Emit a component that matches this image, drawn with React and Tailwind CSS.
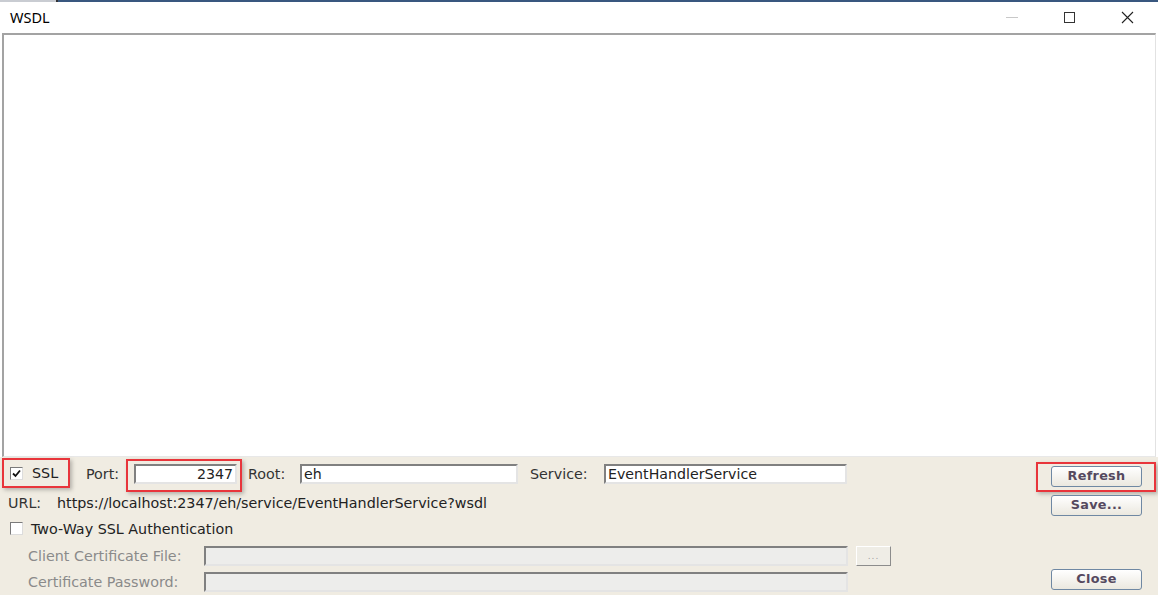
import React from 'react';

function Field({ value = '', width, align = 'left', disabled = false }) {
  return (
    <div
      className={`h-[20px] ${width} border-2 border-t-[#808080] border-l-[#808080] border-r-[#e4e4e4] border-b-[#e4e4e4] ${
        disabled ? 'bg-[#ededeb]' : 'bg-white'
      } flex items-center px-[2px] text-[14.2px] text-[#222] leading-none ${align === 'right' ? 'justify-end' : ''}`}
    >
      {value}
    </div>
  );
}

function Button({ children }) {
  return (
    <button className="w-[91px] h-[21px] rounded-[3px] border border-[#6f88a3] bg-gradient-to-b from-white to-[#ebe8df] text-[12.8px] font-bold text-[#55495f] leading-none tracking-[0.3px]">
      {children}
    </button>
  );
}

function Check({ checked }) {
  return (
    <div className="w-[13px] h-[13px] bg-white border border-t-[#7a7a7a] border-l-[#7a7a7a] border-r-[#dcdcdc] border-b-[#dcdcdc] flex items-center justify-center">
      {checked && (
        <svg width="9" height="9" viewBox="0 0 9 9">
          <path d="M1 4.5 L3.5 7 L8 1.5" fill="none" stroke="#111" strokeWidth="1.8" />
        </svg>
      )}
    </div>
  );
}

export default function App() {
  return (
    <div className="w-[1158px] h-[595px] flex flex-col bg-white overflow-hidden font-['DejaVu_Sans',sans-serif]">
      {/* window top edge */}
      <div className="h-[2px] flex">
        <div className="w-[56px] bg-[#c9ccd2]" />
        <div className="w-[2px] bg-[#333]" />
        <div className="flex-1 bg-[#39577f]" />
      </div>

      {/* title bar */}
      <div className="h-[31px] flex items-center">
        <span className="ml-[10px] text-[14.5px] text-black font-['Noto_Sans',sans-serif]">WSDL</span>
        <div className="ml-auto flex items-center">
          <div className="w-[12px] h-[1px] bg-[#c8c8c8] mr-[46px]" />
          <div className="w-[11px] h-[11px] border border-[#333] mr-[46px]" />
          <svg width="13" height="13" viewBox="0 0 13 13" className="mr-[24px]">
            <path d="M1 1 L12 12 M12 1 L1 12" stroke="#222" strokeWidth="1.1" />
          </svg>
        </div>
      </div>

      {/* wsdl text area */}
      <div className="flex-1 px-[2px]">
        <div className="h-full bg-white border-t-2 border-l-2 border-r border-b border-t-[#a3a3a3] border-l-[#a3a3a3] border-r-[#e2e2e2] border-b-[#e8e8e8]" />
      </div>

      {/* bottom panel */}
      <div className="h-[138px] bg-[#f0ece2] flex text-[14.3px] leading-[16px] text-[#333]">
        <div className="flex-1 flex flex-col">
          {/* row 1 */}
          <div className="h-[37px] flex items-start">
            <div className="ml-[2px] mt-[1px] w-[68px] h-[30px] border-2 border-[#e8353b] shadow-[2px_2px_4px_rgba(0,0,0,0.25)] flex items-center pl-[6px] gap-[9px]">
              <Check checked />
              <span className="text-[#222]">SSL</span>
            </div>
            <span className="ml-[16px] w-[40px] mt-[9px]">Port:</span>
            <div className="w-[116px] h-[33px] mt-[2px] border-2 border-[#e8353b] shadow-[2px_2px_4px_rgba(0,0,0,0.25)] pl-[6px] pt-[3px]">
              <Field value="2347" width="w-[103px]" align="right" />
            </div>
            <span className="ml-[6px] w-[52px] mt-[9px]">Root:</span>
            <div className="mt-[7px]">
              <Field value="eh" width="w-[218px]" />
            </div>
            <span className="ml-[12px] w-[74px] mt-[9px]">Service:</span>
            <div className="mt-[7px]">
              <Field value="EventHandlerService" width="w-[243px]" />
            </div>
          </div>

          {/* url row */}
          <div className="h-[18px] flex items-center">
            <span className="ml-[8px] w-[49px]">URL:</span>
            <span className="text-[#222]">https://localhost:2347/eh/service/EventHandlerService?wsdl</span>
          </div>

          {/* two-way row */}
          <div className="h-[17px] mt-[8px] flex items-center gap-[8px] pl-[10px]">
            <Check />
            <span className="text-[#222]">Two-Way SSL Authentication</span>
          </div>

          {/* client cert */}
          <div className="mt-[9px] h-[20px] flex items-center">
            <span className="ml-[28px] w-[176px] text-[#8a8a8a]">Client Certificate File:</span>
            <Field width="w-[644px]" disabled />
            <div className="ml-[8px] w-[35px] h-[20px] border border-t-white border-l-white border-r-[#8c8c8c] border-b-[#8c8c8c] bg-[#efede6] flex items-center justify-center text-[9px] text-[#a0a0a0] tracking-[1px]">
              ...
            </div>
          </div>

          {/* password */}
          <div className="mt-[6px] h-[20px] flex items-center">
            <span className="ml-[28px] w-[176px] text-[#8a8a8a]">Certificate Password:</span>
            <Field width="w-[644px]" disabled />
          </div>
        </div>

        {/* buttons column */}
        <div className="w-[122px] flex flex-col">
          <div className="mt-[5px] w-[120px] h-[30px] border-2 border-[#e8353b] shadow-[2px_2px_4px_rgba(0,0,0,0.25)] pl-[13px] pt-[2px]">
            <Button>Refresh</Button>
          </div>
          <div className="mt-[3px] pl-[15px]">
            <Button>Save...</Button>
          </div>
          <div className="mt-auto mb-[5px] pl-[15px]">
            <Button>Close</Button>
          </div>
        </div>
      </div>
    </div>
  );
}
